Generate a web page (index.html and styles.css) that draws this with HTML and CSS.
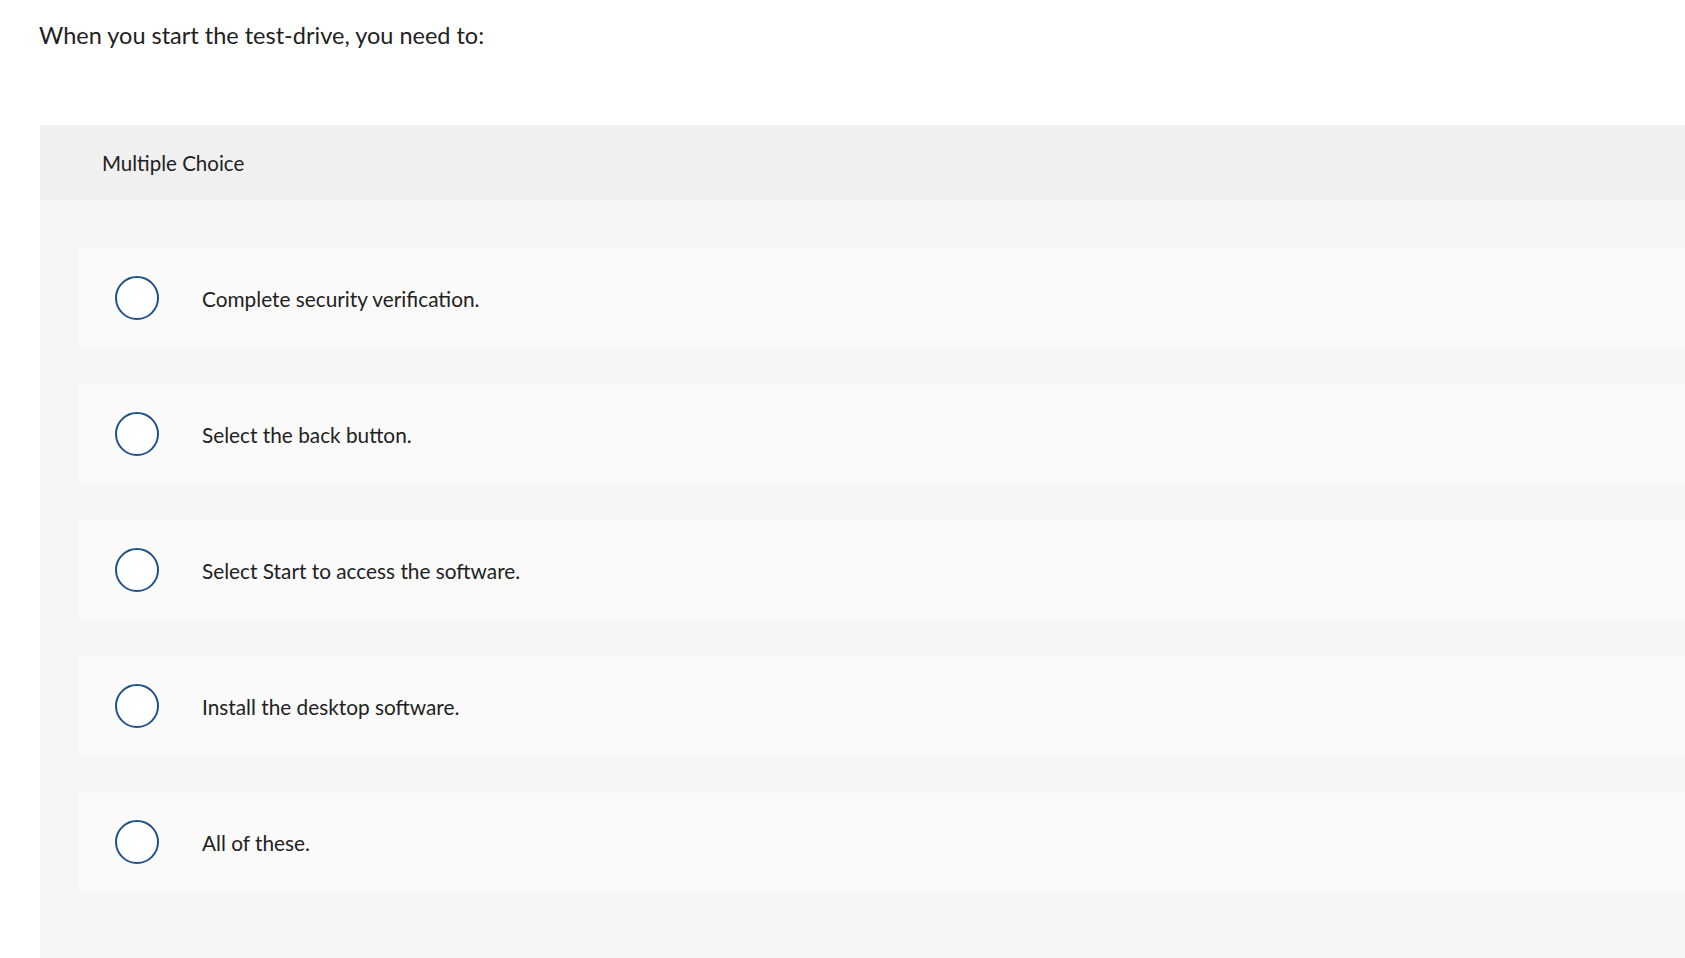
FILE: index.html
```html
<!DOCTYPE html>
<html>
<head>
<meta charset="utf-8">
<link rel="stylesheet" href="styles.css">
</head>
<body>
<div class="page">
  <p class="prompt">When you start the test-drive, you need to:</p>
  <section class="panel">
    <div class="panel-head">Multiple Choice</div>
    <div class="options">
      <label class="option"><span class="radio"></span><span class="text">Complete security verification.</span></label>
      <label class="option"><span class="radio"></span><span class="text">Select the back button.</span></label>
      <label class="option"><span class="radio"></span><span class="text">Select Start to access the software.</span></label>
      <label class="option"><span class="radio"></span><span class="text">Install the desktop software.</span></label>
      <label class="option"><span class="radio"></span><span class="text">All of these.</span></label>
    </div>
  </section>
</div>
</body>
</html>
```
FILE: styles.css
```css
html, body {
  margin: 0;
  padding: 0;
  background: #ffffff;
  overflow: hidden;
}
body {
  font-family: Lato, "Open Sans", "Liberation Sans", sans-serif;
  color: #222222;
}
.page {
  width: 1685px;
  height: 958px;
  overflow: hidden;
}
.prompt {
  margin: 0;
  padding: 20px 0 0 39px;
  font-size: 23.5px;
  line-height: 30px;
  height: 125px;
  box-sizing: border-box;
}
.panel {
  margin-left: 40px;
  width: 1800px;
  height: 900px;
  background: #f5f5f5;
  border-radius: 4px 0 0 0;
}
.panel-head {
  height: 75px;
  background: #f0f0f0;
  border-radius: 4px 0 0 0;
  display: flex;
  align-items: center;
  padding-left: 62px;
  font-size: 20.5px;
}
.options {
  display: flex;
  flex-direction: column;
  gap: 38px;
  padding: 49px 0 0 38px;
}
.option {
  display: flex;
  align-items: center;
  height: 98px;
  background: #fafafa;
  border-radius: 4px;
  padding-left: 37px;
}
.radio {
  width: 40px;
  height: 40px;
  border: 2px solid #1f5289;
  border-radius: 50%;
  background: #ffffff;
  flex: none;
}
.text {
  margin-left: 43px;
  font-size: 20.8px;
  color: #222222;
}
```
